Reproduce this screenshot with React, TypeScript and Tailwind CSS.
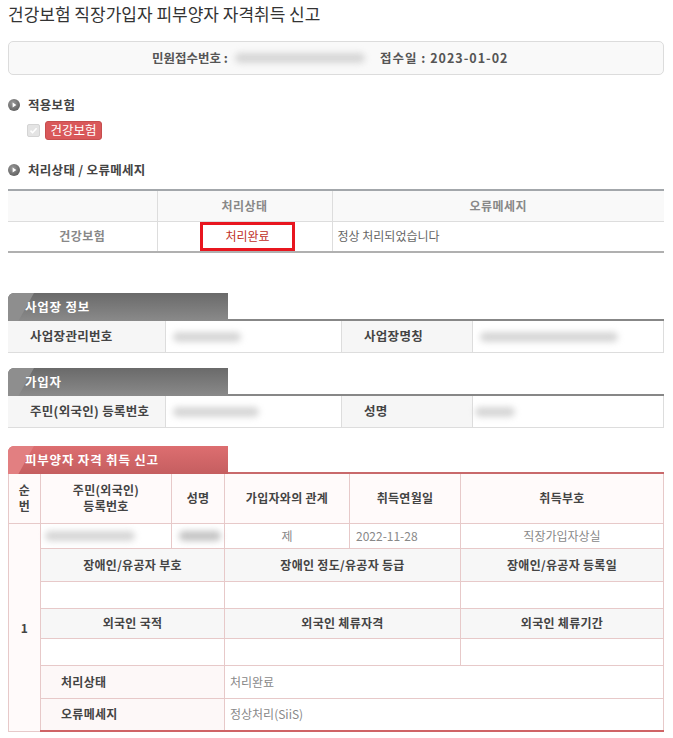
import React from "react";

const F = { fontFamily: '"Noto Sans CJK KR", "Noto Sans", sans-serif' };

function Blur({ w, dark = false }: { w: number; dark?: boolean }) {
  return (
    <div
      className={`h-[10px] rounded-full blur-[3px] ${dark ? "bg-[#c4c4c4]" : "bg-[#d6d6d6]"}`}
      style={{ width: w }}
    />
  );
}

function Bullet() {
  return (
    <svg width="12" height="12" viewBox="0 0 12 12" className="shrink-0">
      <defs>
        <radialGradient id="bg" cx="40%" cy="35%" r="70%">
          <stop offset="0%" stopColor="#9a9a9a" />
          <stop offset="100%" stopColor="#5e5e5e" />
        </radialGradient>
      </defs>
      <circle cx="6" cy="6" r="6" fill="url(#bg)" />
      <path d="M4.6 3.4 L8.4 6 L4.6 8.6 Z" fill="#fff" />
    </svg>
  );
}

function SectionTitle({ children }: { children: React.ReactNode }) {
  return (
    <div className="flex h-[16px] items-center gap-[8px]">
      <Bullet />
      <span className="text-[12.5px] font-bold tracking-[0.3px] text-[#444]">{children}</span>
    </div>
  );
}

function Tab({ label, red = false }: { label: string; red?: boolean }) {
  return (
    <div className="flex items-end">
      <div
        className={`relative h-[28px] w-[220px] overflow-hidden rounded-tl-[6px] ${
          red
            ? "bg-[linear-gradient(to_bottom,#dd6e70,#c55e60)]"
            : "bg-[linear-gradient(to_bottom,#6a6a6a,#8a8a8a)]"
        }`}
      >
        <div
          className={`absolute left-0 top-0 h-full w-[26px] [clip-path:polygon(0_0,100%_0,40%_100%,0_100%)] ${
            red ? "bg-[#e27f81]" : "bg-[#8e8e8e]"
          }`}
        />
        <div className="relative flex h-full items-center pl-[17px] text-[12.5px] font-bold tracking-[0.8px] text-white">
          {label}
        </div>
      </div>
      <div className={`h-[2px] flex-1 ${red ? "bg-[#c9696b]" : "bg-[#878787]"}`} />
    </div>
  );
}

export default function App() {
  const th = "border border-[#e7c9c9] text-[12px] font-bold tracking-[0.3px] text-[#444] text-center";
  const td = "border border-[#e7c9c9] text-[12px] text-[#888] text-center";
  return (
    <div className="min-h-[738px] bg-white pb-[8px]" style={F}>
      <div className="mx-[8px] w-[656px]">
        {/* title */}
        <div className="flex h-[28px] items-center text-[17px] text-[#333]">
          건강보험 직장가입자 피부양자 자격취득 신고
        </div>

        {/* receipt box */}
        <div className="mt-[13px] flex h-[34px] items-center rounded-[5px] border border-[#dcdcdc] bg-[#f9f9f9] pl-[143px] text-[12.5px] font-bold text-[#555]">
          <span>민원접수번호 :</span>
          <div className="ml-[7px]">
            <Blur w={130} />
          </div>
          <span className="ml-[15px] tracking-[1px]">접수일 : 2023-01-02</span>
        </div>

        {/* 적용보험 */}
        <div className="mt-[22px]">
          <SectionTitle>적용보험</SectionTitle>
        </div>
        <div className="mt-[8px] flex items-center gap-[5px] pl-[19px]">
          <div className="flex h-[13px] w-[13px] items-center justify-center rounded-[2px] border border-[#d4d4d4] bg-[#e4e4e4]">
            <svg width="9" height="9" viewBox="0 0 9 9">
              <path d="M1.5 4.6 L3.6 6.7 L7.6 2.2" stroke="#fff" strokeWidth="1.6" fill="none" />
            </svg>
          </div>
          <div className="flex h-[19px] w-[57px] items-center justify-center rounded-[3px] border border-[#c64d4d] bg-[#d9585a] text-[12.5px] text-white">
            건강보험
          </div>
        </div>

        {/* 처리상태 / 오류메세지 */}
        <div className="mt-[22px]">
          <SectionTitle>처리상태 / 오류메세지</SectionTitle>
        </div>
        <table className="mt-[11px] w-full table-fixed border-collapse border-t-2 border-b-2 border-t-[#a3a7ab] border-b-[#b0b0b0]">
          <colgroup>
            <col style={{ width: 149 }} />
            <col style={{ width: 175 }} />
            <col />
          </colgroup>
          <tbody>
            <tr className="h-[31px] bg-[#f9f9f9]">
              <td className="border-b border-[#dddddd] text-center text-[12px] font-bold text-[#888]"></td>
              <td className="border-x border-b border-[#dddddd] text-center text-[12px] font-bold tracking-[0.5px] text-[#888]">처리상태</td>
              <td className="border-b border-[#dddddd] text-center text-[12px] font-bold tracking-[0.5px] text-[#888]">오류메세지</td>
            </tr>
            <tr className="h-[31px]">
              <td className="text-center text-[12px] font-bold tracking-[0.5px] text-[#888]">건강보험</td>
              <td className="border-x border-[#dddddd]">
                <div className="flex justify-center pl-[6px]">
                  <div className="flex h-[29px] w-[95px] items-center justify-center border-[3px] border-[#e8161f] text-[12px] text-[#c0301f]">
                    처리완료
                  </div>
                </div>
              </td>
              <td className="pl-[5px] text-[12px] text-[#666]">정상 처리되었습니다</td>
            </tr>
          </tbody>
        </table>

        {/* 사업장 정보 */}
        <div className="mt-[40px]">
          <Tab label="사업장 정보" />
          <div className="flex h-[32px] border-b border-r border-[#dddddd]">
            <div className="flex w-[157px] items-center bg-[#f6f6f6] pl-[22px] text-[12.5px] font-bold tracking-[0.3px] text-[#444]">사업장관리번호</div>
            <div className="flex w-[176px] items-center border-l border-[#dddddd] pl-[7px]">
              <Blur w={68} />
            </div>
            <div className="flex w-[132px] items-center border-x border-[#dddddd] bg-[#f6f6f6] pl-[22px] text-[12.5px] font-bold tracking-[0.3px] text-[#444]">사업장명칭</div>
            <div className="flex flex-1 items-center pl-[7px]">
              <Blur w={138} />
            </div>
          </div>
        </div>

        {/* 가입자 */}
        <div className="mt-[15px]">
          <Tab label="가입자" />
          <div className="flex h-[32px] border-b border-r border-[#dddddd]">
            <div className="flex w-[157px] items-center bg-[#f6f6f6] pl-[22px] text-[12.5px] font-bold tracking-[0.3px] text-[#444]">주민(외국인) 등록번호</div>
            <div className="flex w-[176px] items-center border-l border-[#dddddd] pl-[7px]">
              <Blur w={86} />
            </div>
            <div className="flex w-[132px] items-center border-x border-[#dddddd] bg-[#f6f6f6] pl-[22px] text-[12.5px] font-bold tracking-[0.3px] text-[#444]">성명</div>
            <div className="flex flex-1 items-center pl-[2px]">
              <Blur w={40} />
            </div>
          </div>
        </div>

        {/* 피부양자 자격 취득 신고 */}
        <div className="mt-[18px]">
          <Tab label="피부양자 자격 취득 신고" red />
          <table className="w-full table-fixed border-collapse">
            <colgroup>
              <col style={{ width: 32 }} />
              <col style={{ width: 131 }} />
              <col style={{ width: 53 }} />
              <col style={{ width: 125 }} />
              <col style={{ width: 111 }} />
              <col />
            </colgroup>
            <tbody>
              <tr className="h-[49px] bg-[#fffafa]">
                <td className={`${th} border-t-0 leading-[16px]`}>순<br />번</td>
                <td className={`${th} border-t-0 leading-[16px]`}>주민(외국인)<br />등록번호</td>
                <td className={`${th} border-t-0`}>성명</td>
                <td className={`${th} border-t-0`}>가입자와의 관계</td>
                <td className={`${th} border-t-0`}>취득연월일</td>
                <td className={`${th} border-t-0`}>취득부호</td>
              </tr>
              <tr className="h-[25px]">
                <td rowSpan={7} className={`${th} bg-[#fffafa] pt-[2px]`}>1</td>
                <td className={td}>
                  <div className="flex pl-[4px]"><Blur w={90} /></div>
                </td>
                <td className={td}>
                  <div className="flex justify-end pr-[3px]"><Blur w={42} dark /></div>
                </td>
                <td className={td}>제</td>
                <td className={`${td} text-left pl-[6px]`}>2022-11-28</td>
                <td className={td}>직장가입자상실</td>
              </tr>
              <tr className="h-[33px] bg-[#f7f7f7]">
                <td colSpan={2} className={th}>장애인/유공자 부호</td>
                <td colSpan={2} className={th}>장애인 정도/유공자 등급</td>
                <td className={th}>장애인/유공자 등록일</td>
              </tr>
              <tr className="h-[27px]">
                <td colSpan={2} className={td}></td>
                <td colSpan={2} className={td}></td>
                <td className={td}></td>
              </tr>
              <tr className="h-[30px] bg-[#f7f7f7]">
                <td colSpan={2} className={th}>외국인 국적</td>
                <td colSpan={2} className={th}>외국인 체류자격</td>
                <td className={th}>외국인 체류기간</td>
              </tr>
              <tr className="h-[27px]">
                <td colSpan={2} className={td}></td>
                <td colSpan={2} className={td}></td>
                <td className={td}></td>
              </tr>
              <tr className="h-[33px]">
                <td colSpan={2} className={`${th} bg-[#fdf8f8] text-left pl-[20px]`}>처리상태</td>
                <td colSpan={3} className={`${td} text-left pl-[5px]`}>처리완료</td>
              </tr>
              <tr className="h-[33px]">
                <td colSpan={2} className={`${th} border-b-2 border-b-[#cf6466] bg-[#fdf8f8] text-left pl-[20px]`}>오류메세지</td>
                <td colSpan={3} className={`${td} border-b-2 border-b-[#cf6466] text-left pl-[5px]`}>정상처리(SiiS)</td>
              </tr>
            </tbody>
          </table>
        </div>
      </div>
    </div>
  );
}
